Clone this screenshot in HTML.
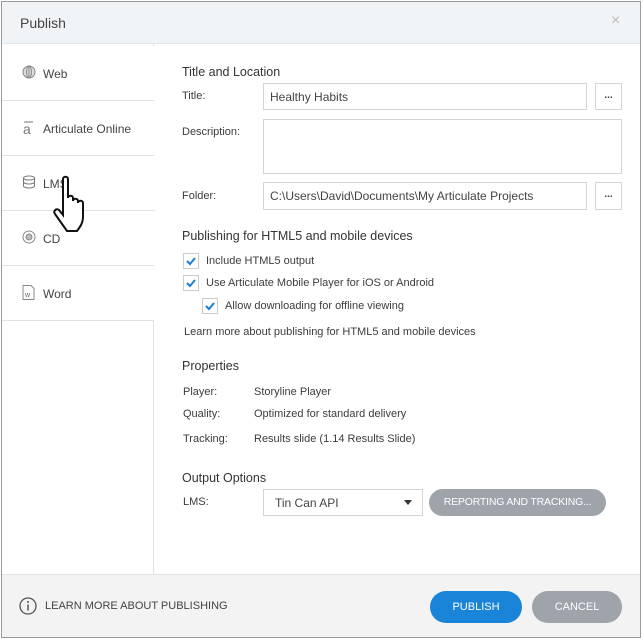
<!DOCTYPE html>
<html><head><meta charset="utf-8"><style>
*{box-sizing:border-box;margin:0;padding:0}
body{width:644px;height:640px;background:#fff;font-family:"Liberation Sans",sans-serif;color:#3c3c3c;font-size:11px;position:relative;overflow:hidden}
.a{position:absolute}
.frame{left:1px;top:1px;width:640px;height:637px;border:1px solid #9a9a9a}
.hdr{left:2px;top:2px;width:638px;height:42px;background:#f1f4f7;border-bottom:1px solid #e2e6ea}
.side{left:2px;top:44px;width:152px;height:530px;border-right:1px solid #e3e3e3}
.item{position:absolute;left:2px;width:152px;height:55px;border-bottom:1px solid #e3e3e3;background:#fff;font-size:12px;color:#444}
.item span{position:absolute;left:41px;top:21px}
.item svg{position:absolute;left:20px;top:19px}
.h{font-size:12.5px;color:#333}
.inp{border:1px solid #d4d4d4;background:#fff;font-size:12px;color:#444;padding:6px 0 0 6px}
.btn{border:1px solid #d4d4d4;background:#fff;font-size:10px;text-align:center;line-height:24px;font-weight:bold}
.foot{left:2px;top:574px;width:638px;height:63px;background:#f3f3f3;border-top:1px solid #e2e2e2}
.pill{border-radius:17px;color:#fff;font-size:11px;text-align:center}
</style></head><body>
<div class="a frame"></div>
<div class="a hdr"><div class="a" style="left:18px;top:13px;font-size:14px;color:#444">Publish</div>
<div class="a" style="left:609px;top:10px;font-size:16px;color:#bbb">×</div></div>
<div class="a side"></div>
<div class="item" style="top:46px;"><svg width="14" height="14" viewBox="0 0 14 14"><circle cx="7" cy="7" r="6" fill="#ddd" stroke="#888"/><ellipse cx="7" cy="7" rx="2.5" ry="6" fill="none" stroke="#888"/><line x1="7" y1="1" x2="7" y2="13" stroke="#888"/></svg><span style="top:21px">Web</span></div>
<div class="item" style="top:101px;"><svg width="14" height="16" viewBox="0 0 14 16"><line x1="2" y1="2" x2="11" y2="2" stroke="#777"/><text x="1" y="14" font-size="14" fill="#777" font-family="Liberation Sans">a</text></svg><span>Articulate Online</span></div>
<div class="item" style="top:156px;width:153px"><svg width="14" height="14" viewBox="0 0 14 14" fill="none" stroke="#777"><ellipse cx="7" cy="3" rx="5.5" ry="2"/><path d="M1.5 3v8c0 1 2.5 2 5.5 2s5.5-1 5.5-2V3M1.5 7c0 1 2.5 2 5.5 2s5.5-1 5.5-2"/></svg><span>LMS</span></div>
<div class="item" style="top:211px;"><svg width="14" height="14" viewBox="0 0 14 14"><circle cx="7" cy="7" r="6" fill="none" stroke="#888"/><circle cx="7" cy="7" r="3" fill="#bbb" stroke="#888"/></svg><span>CD</span></div>
<div class="item" style="top:266px;"><svg width="13" height="15" viewBox="0 0 13 15" fill="none" stroke="#888"><path d="M1 .5h8l3 3v11H1z"/><text x="3" y="12" font-size="7" fill="#666" stroke="none">w</text></svg><span>Word</span></div>
<svg class="a" style="left:49px;top:175px" width="48" height="66" viewBox="0 0 48 66"><path d="M14 4c0-3 5-3 5 0v19c0-3 5-3 5 0v3c0-3 5-3 5 0v2c0-3 5-3 5 0v14c0 6-3 10-6 14H18L6 39c-2-3 1-6 4-4l4 5z" fill="#fff" stroke="#111" stroke-width="2"/></svg>
<div class="a h" style="left:182px;top:65px">Title and Location</div>
<div class="a" style="left:182px;top:90px">Title:</div>
<div class="a inp" style="left:263px;top:83px;width:324px;height:27px">Healthy Habits</div>
<div class="a btn" style="left:595px;top:83px;width:27px;height:27px">...</div>
<div class="a" style="left:182px;top:126px">Description:</div>
<div class="a inp" style="left:263px;top:119px;width:359px;height:55px"></div>
<div class="a" style="left:182px;top:190px">Folder:</div>
<div class="a inp" style="left:263px;top:182px;width:324px;height:28px">C:\Users\David\Documents\My Articulate Projects</div>
<div class="a btn" style="left:595px;top:182px;width:27px;height:28px">...</div>
<div class="a h" style="left:182px;top:229px">Publishing for HTML5 and mobile devices</div>
<svg class="a" style="left:183px;top:253px" width="16" height="16"><rect x=".5" y=".5" width="15" height="15" fill="#fff" stroke="#ccc"/><path d="M4 8l3 3 5-6" stroke="#1a7fd1" stroke-width="2" fill="none"/></svg>
<div class="a" style="left:206px;top:255px">Include HTML5 output</div>
<svg class="a" style="left:183px;top:275px" width="16" height="16"><rect x=".5" y=".5" width="15" height="15" fill="#fff" stroke="#ccc"/><path d="M4 8l3 3 5-6" stroke="#1a7fd1" stroke-width="2" fill="none"/></svg>
<div class="a" style="left:206px;top:277px">Use Articulate Mobile Player for iOS or Android</div>
<svg class="a" style="left:202px;top:298px" width="16" height="16"><rect x=".5" y=".5" width="15" height="15" fill="#fff" stroke="#ccc"/><path d="M4 8l3 3 5-6" stroke="#1a7fd1" stroke-width="2" fill="none"/></svg>
<div class="a" style="left:225px;top:300px">Allow downloading for offline viewing</div>
<div class="a" style="left:184px;top:326px">Learn more about publishing for HTML5 and mobile devices</div>
<div class="a h" style="left:182px;top:359px">Properties</div>
<div class="a" style="left:183px;top:386px">Player:</div><div class="a" style="left:254px;top:386px">Storyline Player</div>
<div class="a" style="left:183px;top:408px">Quality:</div><div class="a" style="left:254px;top:408px">Optimized for standard delivery</div>
<div class="a" style="left:183px;top:433px">Tracking:</div><div class="a" style="left:254px;top:433px">Results slide (1.14 Results Slide)</div>
<div class="a h" style="left:182px;top:471px">Output Options</div>
<div class="a" style="left:183px;top:496px">LMS:</div>
<div class="a inp" style="left:263px;top:489px;width:160px;height:27px;padding:6px 0 0 11px">Tin Can API</div>
<svg class="a" style="left:404px;top:500px" width="8" height="6"><path d="M0 0h8L4 5z" fill="#333"/></svg>
<div class="a pill" style="left:429px;top:489px;width:177px;height:27px;line-height:27px;background:#9ea4aa;font-size:10.5px;letter-spacing:-.2px">REPORTING AND TRACKING...</div>
<div class="a foot"></div>
<svg class="a" style="left:19px;top:597px" width="18" height="18"><circle cx="9" cy="9" r="8" fill="none" stroke="#555" stroke-width="1.3"/><rect x="8.3" y="7.5" width="1.5" height="6" fill="#555"/><circle cx="9" cy="5" r="1" fill="#555"/></svg>
<div class="a" style="left:45px;top:600px;font-size:11px;color:#444">LEARN MORE ABOUT PUBLISHING</div>
<div class="a pill" style="left:430px;top:591px;width:92px;height:32px;line-height:32px;background:#1a84d8">PUBLISH</div>
<div class="a pill" style="left:532px;top:591px;width:90px;height:32px;line-height:32px;background:#9ea4aa">CANCEL</div>
</body></html>
